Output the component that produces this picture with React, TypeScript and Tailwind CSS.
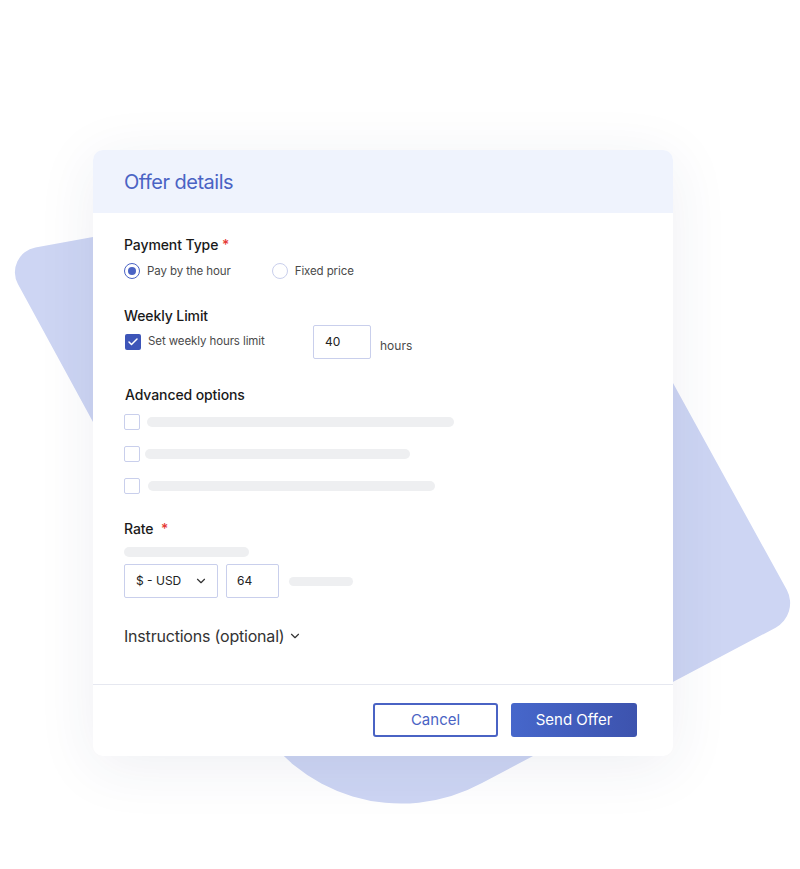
import { Check, ChevronDown } from "lucide-react"

const FONT = "font-['Inter','Noto_Sans',sans-serif]"

const BackShape = () => (
  <svg
    className="absolute inset-0 h-full w-full"
    viewBox="0 0 800 869"
    aria-hidden
  >
    <path
      fill="#cdd5f3"
      d="M 35.4 247.6 L 517.5 159.4 Q 547 154 561.5 180.3 L 786.9 590.1 A 28 28 0 0 1 775.6 627.7 L 482 783 A 169 169 0 0 1 252 714 L 17.9 284.1 A 25 25 0 0 1 35.4 247.6 Z"
    />
  </svg>
)

const Radio = ({ checked, label }: { checked?: boolean; label: string }) => (
  <label className="flex items-center gap-[7px]">
    <span
      className={
        checked
          ? "flex h-4 w-4 items-center justify-center rounded-full border-[1.5px] border-[#4a63c4]"
          : "h-4 w-4 rounded-full border-[1.5px] border-[#c9cfec]"
      }
    >
      {checked && <span className="h-2 w-2 rounded-full bg-[#4a63c4]" />}
    </span>
    <span className="text-[11.5px] leading-4 tracking-[-0.1px] text-[#4a4a4a]">
      {label}
    </span>
  </label>
)

const EmptyBox = () => (
  <span className="h-4 w-4 shrink-0 rounded-[2px] border-[1.5px] border-[#c9cfec] bg-white" />
)

const SkeletonRow = ({ w, offset }: { w: string; offset: string }) => (
  <div className="flex h-4 items-center">
    <EmptyBox />
    <span className={`h-[10px] rounded-full bg-[#eeeff1] ${w} ${offset}`} />
  </div>
)

export default function App() {
  return (
    <div className={`relative h-[869px] w-[800px] overflow-hidden bg-white ${FONT}`}>
      <BackShape />
      <div className="relative ml-[93px] mt-[150px] w-[580px] rounded-[10px] bg-white shadow-[0_10px_60px_rgba(40,50,100,0.08)]">
        {/* header */}
        <div className="flex h-[63px] items-center rounded-t-[10px] bg-[#eff3fd] px-[31px]">
          <h1 className="text-[20px] font-normal tracking-[-0.5px] text-[#4a63c4]">
            Offer details
          </h1>
        </div>

        <div className="px-[31px] pb-[37px] pt-[22px]">
          {/* payment type */}
          <div className="text-[14px] font-medium leading-5 tracking-[-0.1px] text-[#1a1a1a]">
            Payment Type <span className="text-[#e53935]">*</span>
          </div>
          <div className="mt-2 flex items-center gap-[41px]">
            <Radio checked label="Pay by the hour" />
            <Radio label="Fixed price" />
          </div>

          {/* weekly limit */}
          <div className="mt-[28px] text-[14px] font-medium leading-[18px] tracking-[-0.1px] text-[#1a1a1a]">
            Weekly Limit
          </div>
          <div className="flex h-[34px] items-center">
            <span className="ml-px flex h-4 w-4 items-center justify-center rounded-[2px] bg-[#3d55b8]">
              <Check className="h-3 w-3 text-white" strokeWidth={3} />
            </span>
            <span className="ml-[7px] w-[165px] text-[11.5px] tracking-[-0.1px] text-[#4a4a4a]">
              Set weekly hours limit
            </span>
            <div className="flex h-[34px] w-[58px] items-center rounded-[2px] border border-[#c9cfec] pl-[11px] text-[12px] text-[#222]">
              40
            </div>
            <span className="ml-[9px] mt-[8px] text-[12px] text-[#4a4a4a]">hours</span>
          </div>

          {/* advanced */}
          <div className="ml-px mt-[27px] text-[14px] font-medium leading-[18px] tracking-[-0.1px] text-[#1a1a1a]">
            Advanced options
          </div>
          <div className="mt-[10px] flex flex-col gap-4">
            <SkeletonRow w="w-[307px]" offset="ml-[7px]" />
            <SkeletonRow w="w-[265px]" offset="ml-[5px]" />
            <SkeletonRow w="w-[287px]" offset="ml-[8px]" />
          </div>

          {/* rate */}
          <div className="mt-[26px] text-[14px] font-medium leading-[18px] tracking-[-0.1px] text-[#1a1a1a]">
            Rate <span className="ml-1 text-[#e53935]">*</span>
          </div>
          <div className="mt-[9px] h-[10px] w-[125px] rounded-full bg-[#eeeff1]" />
          <div className="mt-[7px] flex items-center gap-2">
            <div className="flex h-[34px] w-[94px] items-center justify-between rounded-[2px] border border-[#c9cfec] pl-[11px] pr-[9px] text-[12px] text-[#222]">
              <span>$ - USD</span>
              <ChevronDown className="h-3.5 w-3.5 text-[#333]" strokeWidth={2} />
            </div>
            <div className="flex h-[34px] w-[53px] items-center rounded-[2px] border border-[#c9cfec] px-[10px] text-[12px] text-[#222]">
              64
            </div>
            <span className="ml-[2px] h-[9px] w-[64px] rounded-full bg-[#eeeff1]" />
          </div>

          {/* instructions */}
          <div className="mt-[27px] flex items-center gap-1 text-[16px] leading-[22px] tracking-[-0.2px] text-[#333]">
            Instructions (optional)
            <ChevronDown className="h-3.5 w-3.5 text-[#333]" strokeWidth={2} />
          </div>
        </div>

        {/* footer */}
        <div className="flex justify-end gap-[13px] border-t border-[#e6e8f0] pb-[19px] pr-[36px] pt-[18px]">
          <button className="h-[34px] w-[125px] rounded-[3px] border-2 border-[#4a63c4] bg-white text-[15px] text-[#4a63c4]">
            Cancel
          </button>
          <button className="h-[34px] w-[126px] rounded-[3px] bg-linear-to-r from-[#4667cb] to-[#3d53ae] text-[15px] text-white">
            Send Offer
          </button>
        </div>
      </div>
    </div>
  )
}
